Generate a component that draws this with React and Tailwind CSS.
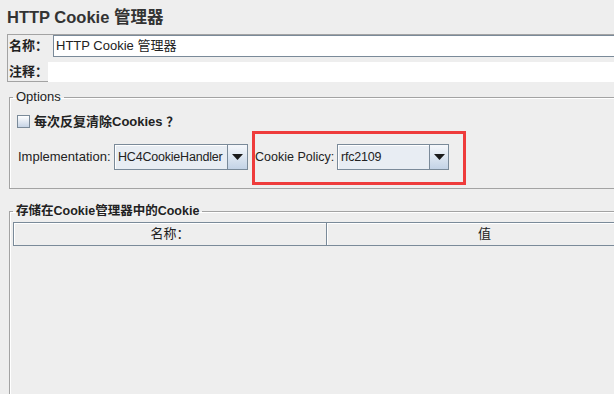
export default function App() {
  const Arrow = () => (
    <svg width="11" height="6" viewBox="0 0 11 6">
      <path d="M0 0 L11 0 L5.5 6 Z" fill="#1a1a1a" />
    </svg>
  );
  const Combo = ({ w, text, arrowW }) => (
    <div className={`flex shrink-0 h-[26px] border border-[#7a8a99] ${w}`}>
      <div className="flex-1 min-w-0 overflow-hidden whitespace-nowrap flex items-center pl-[3px] bg-[#e8edf3] shadow-[inset_1px_1px_0_#ffffff] text-[12.5px] tracking-[-0.2px] text-[#222]">
        {text}
      </div>
      <div className={`${arrowW} shrink-0 border-l border-[#7a8a99] bg-linear-to-b from-[#f6f8fb] to-[#c3d3e6] flex items-center justify-center`}>
        <Arrow />
      </div>
    </div>
  );
  return (
    <div className="w-[614px] h-[394px] overflow-hidden bg-[#eeeeee] text-[#333333] font-['Liberation_Sans','Noto_Sans_CJK_SC',sans-serif] flex flex-col">
      <div className="h-[34px] shrink-0 pl-[7px] pt-[6px] text-[16.5px] font-bold leading-[22px] text-[#333]">
        HTTP Cookie 管理器
      </div>

      <div className="ml-[7px] w-[640px] h-[48px] shrink-0 border border-[#a3a3a3] flex flex-col">
        <div className="h-[22px] shrink-0 flex items-center">
          <div className="w-[45px] pl-[1px] text-[13px] font-bold text-[#222]">名称：</div>
          <div className="flex-1 h-[22px] border border-[#7a8a99] bg-white pl-[2px] flex items-center text-[13px] text-[#222]">
            HTTP Cookie 管理器
          </div>
        </div>
        <div className="flex-1 flex items-stretch pt-[5px]">
          <div className="w-[40px] pl-[1px] flex items-center text-[13px] font-bold text-[#222]">注释：</div>
          <div className="flex-1 bg-white" />
        </div>
      </div>

      <fieldset className="ml-[9px] mt-[7px] w-[640px] shrink-0 border border-[#a3a3a3] shadow-[inset_1px_1px_0_#ffffff] pb-[3px]">
        <legend className="ml-[3px] px-[3px] text-[13px] leading-[16px] text-[#222]">Options</legend>
        <div className="mt-[7px] h-[19px] flex items-center pl-[7px]">
          <div className="w-[13px] h-[13px] border border-[#7a8a99] bg-linear-to-b from-[#ffffff] to-[#c6d4e6]" />
          <span className="ml-[4px] text-[13px] font-bold text-[#222]">每次反复清除Cookies ？</span>
        </div>
        <div className="h-[54px] flex items-start">
          <div className="ml-[8px] mt-[13px] flex items-center">
            <div className="w-[96px] shrink-0 whitespace-nowrap text-[13px] text-[#222]">Implementation:</div>
            <Combo w="w-[134px]" text="HC4CookieHandler" arrowW="w-[20px]" />
          </div>
          <div className="ml-[4px] w-[214px] h-[54px] shrink-0 border-[3px] border-[#ee3b3b] flex items-start pt-[10px]">
            <div className="w-[82px] shrink-0 whitespace-nowrap text-[12.5px] text-[#222] leading-[26px]">Cookie Policy:</div>
            <Combo w="w-[112px]" text="rfc2109" arrowW="w-[19px]" />
          </div>
        </div>
      </fieldset>

      <fieldset className="ml-[9px] mt-[14px] w-[640px] h-[240px] shrink-0 border border-[#a3a3a3] shadow-[inset_1px_1px_0_#ffffff] flex flex-col">
        <legend className="ml-[3px] px-[3px] text-[12.5px] font-bold leading-[16px] text-[#222]">存储在Cookie管理器中的Cookie</legend>
        <div className="ml-[3px] mt-[3px] flex-1 border-l border-t border-[#7a8a99] flex flex-col">
          <div className="h-[23px] shrink-0 flex border-b border-[#7a8a99]">
            <div className="w-[313px] border-r border-[#7a8a99] shadow-[inset_1px_1px_0_#ffffff] flex items-center justify-center text-[13px] text-[#222]">
              名称：
            </div>
            <div className="w-[315px] shadow-[inset_1px_1px_0_#ffffff] flex items-center justify-center text-[13px] text-[#222]">
              值
            </div>
          </div>
          <div className="flex-1 bg-[#eeeeee]" />
        </div>
      </fieldset>
    </div>
  );
}
